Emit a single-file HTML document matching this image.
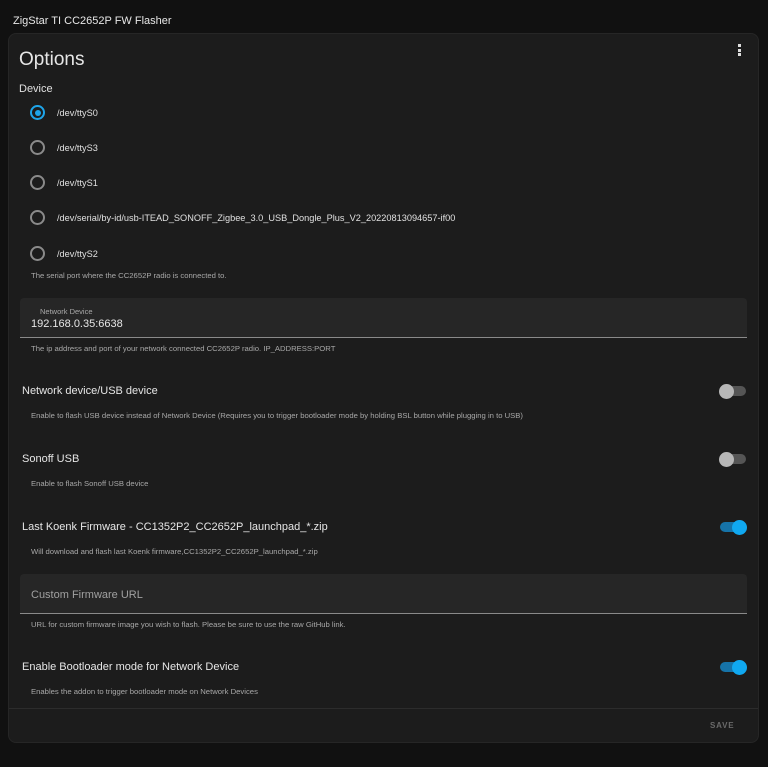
<!DOCTYPE html>
<html><head><meta charset="utf-8"><style>
*{margin:0;padding:0;box-sizing:border-box}
body{width:768px;height:767px;background:#111111;font-family:"Liberation Sans",sans-serif;color:#e1e1e1;position:relative;overflow:hidden}
.a{position:absolute;white-space:nowrap}
.card{position:absolute;left:8px;top:33px;width:751px;height:710px;background:#1c1c1c;border-radius:8px;border:1px solid #262626}
.radio{position:absolute;left:30px;width:15px;height:15px;border:2px solid #8a8a8a;border-radius:50%}
.radio.on{border-color:#1ea5e9}
.radio.on::after{content:"";position:absolute;left:2.5px;top:2.5px;width:6px;height:6px;border-radius:50%;background:#1ea5e9}
.rl{font-size:9.2px;color:#e0e0e0;left:57px}
.help{font-size:7.7px;color:#a8a8a8;left:31px}
.h{font-size:11px;color:#e6e6e6;left:22px}
.tg{position:absolute;left:720px;width:26px;height:10px;border-radius:5px;background:#555}
.tg::after{content:"";position:absolute;left:-1px;top:-2.5px;width:15px;height:15px;border-radius:50%;background:#b7b7b7}
.tg.on{background:#1673a8}
.tg.on::after{left:12px;background:#10a8f0}
.field{position:absolute;left:20px;width:727px;height:40px;background:#262626;border-bottom:1px solid #8a8a8a;border-radius:4px 4px 0 0}
</style></head><body>
<div class="a" style="left:13px;top:15px;font-size:11px;color:#e8e8e8">ZigStar TI CC2652P FW Flasher</div>
<div class="card"></div>
<div class="a" style="left:19px;top:49px;font-size:19px;color:#e6e6e6">Options</div>
<div style="position:absolute;left:738px;top:44px;width:3px;height:12px">
<div style="width:3px;height:3px;background:#ddd;margin-bottom:1.5px"></div><div style="width:3px;height:3px;background:#ddd;margin-bottom:1.5px"></div><div style="width:3px;height:3px;background:#ddd"></div></div>
<div class="a" style="left:19px;top:83px;font-size:11px;color:#e0e0e0">Device</div>
<div class="radio on" style="top:105px"></div><div class="a rl" style="top:108px">/dev/ttyS0</div>
<div class="radio" style="top:140px"></div><div class="a rl" style="top:143px">/dev/ttyS3</div>
<div class="radio" style="top:175px"></div><div class="a rl" style="top:178px">/dev/ttyS1</div>
<div class="radio" style="top:210px"></div><div class="a rl" style="top:213px">/dev/serial/by-id/usb-ITEAD_SONOFF_Zigbee_3.0_USB_Dongle_Plus_V2_20220813094657-if00</div>
<div class="radio" style="top:246px"></div><div class="a rl" style="top:249px">/dev/ttyS2</div>
<div class="a help" style="top:271px">The serial port where the CC2652P radio is connected to.</div>
<div class="field" style="top:298px"></div>
<div class="a" style="left:40px;top:307px;font-size:7.5px;color:#a8a8a8">Network Device</div>
<div class="a" style="left:31px;top:318px;font-size:11px;color:#e6e6e6">192.168.0.35:6638</div>
<div class="a help" style="top:344px">The ip address and port of your network connected CC2652P radio. IP_ADDRESS:PORT</div>
<div class="a h" style="top:385px">Network device/USB device</div>
<div class="tg" style="top:386px"></div>
<div class="a help" style="top:411px">Enable to flash USB device instead of Network Device (Requires you to trigger bootloader mode by holding BSL button while plugging in to USB)</div>
<div class="a h" style="top:453px">Sonoff USB</div>
<div class="tg" style="top:454px"></div>
<div class="a help" style="top:479px">Enable to flash Sonoff USB device</div>
<div class="a h" style="top:521px">Last Koenk Firmware - CC1352P2_CC2652P_launchpad_*.zip</div>
<div class="tg on" style="top:522px"></div>
<div class="a help" style="top:547px">Will download and flash last Koenk firmware,CC1352P2_CC2652P_launchpad_*.zip</div>
<div class="field" style="top:574px"></div>
<div class="a" style="left:31px;top:589px;font-size:11px;color:#a0a0a0">Custom Firmware URL</div>
<div class="a help" style="top:620px">URL for custom firmware image you wish to flash. Please be sure to use the raw GitHub link.</div>
<div class="a h" style="top:661px">Enable Bootloader mode for Network Device</div>
<div class="tg on" style="top:662px"></div>
<div class="a help" style="top:687px">Enables the addon to trigger bootloader mode on Network Devices</div>
<div style="position:absolute;left:9px;top:708px;width:749px;height:1px;background:#2c2c2c"></div>
<div class="a" style="left:710px;top:721px;font-size:8px;color:#6a6a6a;letter-spacing:0.8px;font-weight:bold">SAVE</div>
</body></html>
